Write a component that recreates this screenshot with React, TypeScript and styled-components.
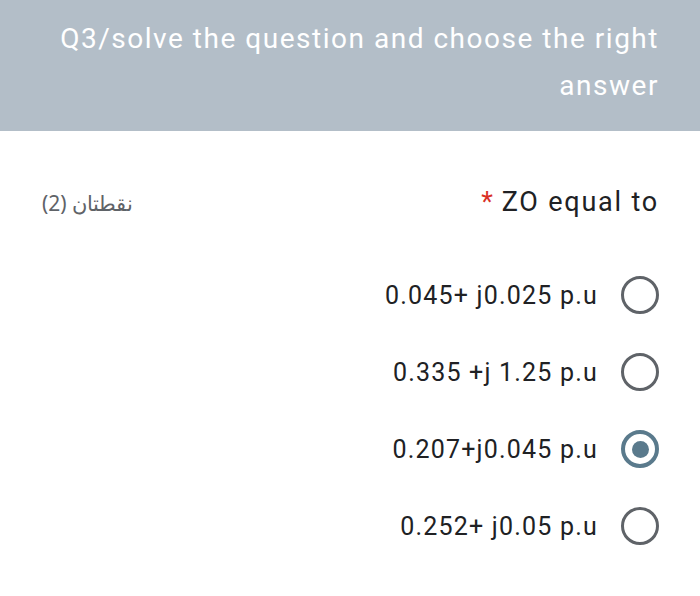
import React, { useState } from "react"
import styled, { createGlobalStyle } from "styled-components"

const GlobalStyle = createGlobalStyle`
  body {
    margin: 0;
    background: #ffffff;
    font-family: Roboto, "Noto Sans", Arial, sans-serif;
  }
`

const Page = styled.div`
  width: 700px;
  min-height: 596px;
  background: #ffffff;
`

const Header = styled.header`
  background: #b3bec8;
  color: #ffffff;
  text-align: right;
  font-size: 28px;
  letter-spacing: 1.52px;
  line-height: 47px;
  padding: 15px 41px 22px 56px;
`

const QuestionRow = styled.div`
  display: flex;
  justify-content: space-between;
  align-items: baseline;
  padding: 0 41px 0 42px;
  margin-top: 56px;
`

const Points = styled.span`
  font-family: "Noto Sans", Roboto, sans-serif;
  font-size: 21px;
  letter-spacing: 0.6px;
  color: #5f6368;
`

const Title = styled.span`
  font-size: 27px;
  letter-spacing: 1.8px;
  line-height: 30px;
  color: #202124;
`

const Star = styled.span`
  color: #d93025;
  margin-right: 7px;
`

const Options = styled.div`
  display: flex;
  flex-direction: column;
  gap: 37px;
  margin-top: 58px;
  padding-right: 41px;
`

const Option = styled.label`
  display: flex;
  justify-content: flex-end;
  align-items: center;
  gap: 23px;
  height: 40px;
  cursor: pointer;
`

const OptionText = styled.span`
  font-size: 25px;
  letter-spacing: 1.2px;
  color: #202124;
`

const Radio = styled.span<{ $checked: boolean }>`
  box-sizing: border-box;
  width: 38px;
  height: 38px;
  border-radius: 50%;
  border: ${p => (p.$checked ? "4px solid #5a7a8c" : "3.5px solid #5f6368")};
  display: flex;
  align-items: center;
  justify-content: center;
  &::after {
    content: "";
    display: ${p => (p.$checked ? "block" : "none")};
    width: 17px;
    height: 17px;
    border-radius: 50%;
    background: #5a7a8c;
  }
`

const answers = [
  "0.045+ j0.025 p.u",
  "0.335 +j 1.25 p.u",
  "0.207+j0.045 p.u",
  "0.252+ j0.05 p.u"
]

export default function App() {
  const [selected, setSelected] = useState(2)
  return (
    <Page>
      <GlobalStyle />
      <Header>Q3/solve the question and choose the right answer</Header>
      <QuestionRow>
        <Points dir="rtl">نقطتان (2)</Points>
        <Title>
          <Star>*</Star>ZO equal to
        </Title>
      </QuestionRow>
      <Options>
        {answers.map((a, i) => (
          <Option key={a} onClick={() => setSelected(i)}>
            <OptionText>{a}</OptionText>
            <Radio $checked={selected === i} />
          </Option>
        ))}
      </Options>
    </Page>
  )
}
